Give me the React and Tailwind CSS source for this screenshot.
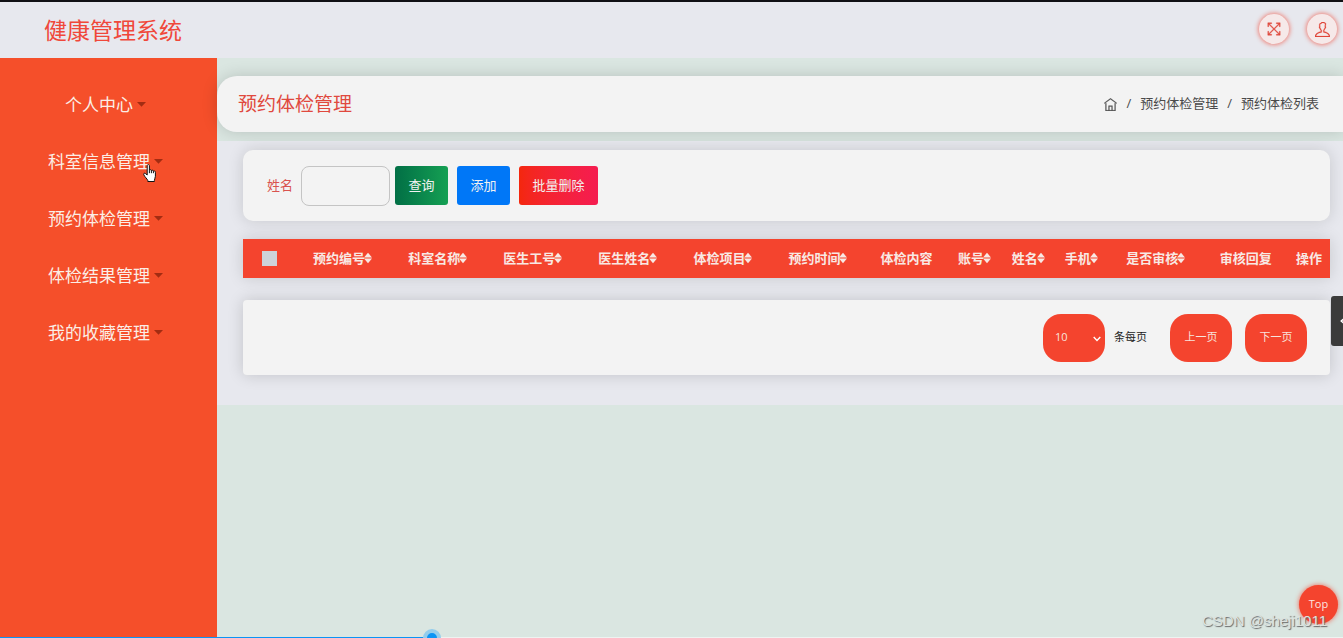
import { TfiFullscreen, TfiHome, TfiUser } from 'react-icons/tfi'

const menu = ['个人中心', '科室信息管理', '预约体检管理', '体检结果管理', '我的收藏管理']

const columns = [
  { name: '预约编号', sort: true, width: 'w-[95px]' },
  { name: '科室名称', sort: true, width: 'w-[95px]' },
  { name: '医生工号', sort: true, width: 'w-[95px]' },
  { name: '医生姓名', sort: true, width: 'w-[95px]' },
  { name: '体检项目', sort: true, width: 'w-[95px]' },
  { name: '预约时间', sort: true, width: 'w-[95px]' },
  { name: '体检内容', sort: false, width: 'w-[82px]' },
  { name: '账号', sort: true, width: 'w-[54px]' },
  { name: '姓名', sort: true, width: 'w-[53px]' },
  { name: '手机', sort: true, width: 'w-[53px]' },
  { name: '是否审核', sort: true, width: 'w-[96px]' },
  { name: '审核回复', sort: false, width: 'w-[84px]' },
  { name: '操作', sort: false, width: 'w-[42px]' },
]

const Caret = () => (
  <svg className="w-[9px] h-[5px] text-[#a32c12]" viewBox="0 0 9 5" fill="currentColor">
    <path d="M0 0h9L4.5 4.8z" />
  </svg>
)

const SortIcon = () => (
  <svg className="inline-block w-2 h-3 -ml-px align-[-1px]" viewBox="0 0 8 12" fill="currentColor">
    <path d="M0 5.4L4 0.8l4 4.6zM0 6.6h8L4 11.2z" />
  </svg>
)

const RoundButton = ({ label, children }) => (
  <button
    aria-label={label}
    className="flex items-center justify-center w-[30px] h-[30px] rounded-full bg-[#f6e9e9] text-[#e0463a] shadow-[0_0_4px_1px_rgba(244,67,46,0.6)]"
  >
    {children}
  </button>
)

const Header = () => (
  <header className="flex items-center justify-between h-[58px] border-t-2 border-[#101014] bg-[#e7e8ee] pl-11 pr-[6px]">
    <h1 className="text-[23px] leading-8 text-[#f0473a]">健康管理系统</h1>
    <div className="flex gap-[18px] pb-[2px]">
      <RoundButton label="全屏">
        <TfiFullscreen className="w-[14px] h-[14px]" strokeWidth="0.5" />
      </RoundButton>
      <RoundButton label="用户">
        <TfiUser className="w-[15px] h-[15px]" strokeWidth="0.3" />
      </RoundButton>
    </div>
  </header>
)

const Sidebar = () => (
  <nav className="w-[217px] shrink-0 bg-[#f54f2a] pt-[18px] pr-[6px]">
    {menu.map((item) => (
      <a
        key={item}
        href="#"
        className="flex items-center justify-center gap-1 h-[57px] text-[17px] text-[#fbeee6]"
      >
        {item}
        <Caret />
      </a>
    ))}
  </nav>
)

const Breadcrumb = () => (
  <div className="flex items-center justify-between h-14 rounded-l-[20px] bg-[#f3f3f3] pl-[21px] pr-6 shadow-[0_0_16px_rgba(0,0,0,0.16)]">
    <h2 className="text-[19px] text-[#e0493e]">预约体检管理</h2>
    <div className="flex items-center gap-[9px] text-[13px] text-[#4a4a4a]">
      <a href="#" aria-label="首页">
        <TfiHome className="w-[13px] h-[13px]" strokeWidth="0.4" />
      </a>
      <span>/</span>
      <a href="#">预约体检管理</a>
      <span>/</span>
      <span>预约体检列表</span>
    </div>
  </div>
)

const SearchBar = () => (
  <form className="flex items-center h-[71px] rounded-[10px] bg-[#f3f3f3] pl-6 text-[13px] shadow-[0_0_16px_rgba(0,0,0,0.14)]">
    <label htmlFor="name" className="text-[#d9534f]">
      姓名
    </label>
    <input
      id="name"
      type="text"
      className="w-[89px] h-10 ml-2 rounded-lg border border-[#c4c4c4] bg-transparent px-3"
    />
    <button type="button" className="w-[53px] h-[39px] ml-[5px] rounded-[3px] bg-linear-to-r from-[#026f45] to-[#15a053] text-[#f2f2f2]">
      查询
    </button>
    <button type="button" className="w-[53px] h-[39px] ml-[9px] rounded-[3px] bg-[#0077f7] text-[#f2f2f2]">
      添加
    </button>
    <button type="button" className="w-[79px] h-[39px] ml-[9px] rounded-[3px] bg-linear-to-r from-[#f4270c] to-[#f51c50] text-[#f2f2f2]">
      批量删除
    </button>
  </form>
)

const DataTable = () => (
  <table className="w-full mt-[18px] table-fixed bg-[#f4442e] text-[13px] text-[#f8e9e4] shadow-[0_0_16px_rgba(0,0,0,0.14)]">
    <thead>
      <tr className="h-[39px]">
        <th className="w-[52px]">
          <input
            type="checkbox"
            aria-label="全选"
            className="block w-[15px] h-[15px] mx-auto appearance-none bg-[#ced2d8]"
          />
        </th>
        {columns.map((col) => (
          <th key={col.name} className={`${col.width} p-0 font-bold whitespace-nowrap`}>
            {col.name}
            {col.sort && <SortIcon />}
          </th>
        ))}
      </tr>
    </thead>
  </table>
)

const Pagination = () => (
  <div className="flex items-center justify-end h-[75px] mt-[22px] rounded bg-[#f3f3f3] pr-[23px] text-[11px] shadow-[0_0_16px_rgba(0,0,0,0.16)]">
    <div className="relative">
      <select
        id="size"
        defaultValue="10"
        className="block w-[62px] h-12 appearance-none rounded-[18px] bg-[#f4442e] pl-3 text-[#f8e3dd]"
      >
        <option>10</option>
        <option>20</option>
        <option>50</option>
      </select>
      <svg className="absolute right-1 top-[22px] w-2 h-[6px] text-white pointer-events-none" viewBox="0 0 8 6" fill="none" stroke="currentColor" strokeWidth="1.4">
        <path d="M0.7 1L4 4.4 7.3 1" />
      </svg>
    </div>
    <label htmlFor="size" className="ml-[9px] text-[#222]">
      条每页
    </label>
    <button className="w-[62px] h-12 ml-[23px] rounded-[18px] bg-[#f4442e] text-[#f8e3dd]">上一页</button>
    <button className="w-[62px] h-12 ml-[13px] rounded-[18px] bg-[#f4442e] text-[#f8e3dd]">下一页</button>
  </div>
)

const App = () => {
  return (
    <div
      lang="zh-CN"
      className="relative flex flex-col min-h-screen overflow-hidden bg-[#dae6e1] font-['Open_Sans','Noto_Sans_CJK_SC',sans-serif]"
    >
      <Header />
      <div className="flex grow">
        <Sidebar />
        <main className="grow min-w-0 pt-[18px]">
          <Breadcrumb />
          <section className="mt-[9px] bg-[#e7e8ee] pt-[9px] pb-[30px] pl-[26px] pr-[13px]">
            <SearchBar />
            <DataTable />
            <Pagination />
          </section>
        </main>
      </div>

      {/* drawer handle */}
      <button
        aria-label="展开"
        className="absolute right-0 top-[296px] flex items-center w-3 h-[50px] overflow-hidden rounded-l-[3px] bg-[#3b3b3b] pl-[9px] text-white"
      >
        <svg className="w-[6px] h-2 shrink-0" viewBox="0 0 6 8" fill="none" stroke="currentColor" strokeWidth="1.4">
          <path d="M5 0.8L1.2 4 5 7.2" />
        </svg>
      </button>

      <a
        href="#"
        className="absolute right-[5px] bottom-[14px] flex items-center justify-center w-[39px] h-[39px] rounded-full bg-[#f4442e] text-[11px] text-[#fbe6e0] shadow-[0_0_5px_rgba(244,68,46,0.8)]"
      >
        Top
      </a>
      <span className="absolute right-4 bottom-[7px] font-['Liberation_Sans',sans-serif] text-[15px] leading-5 text-[#dde3e0] [text-shadow:1px_1px_1px_#666]">
        CSDN @sheji1011
      </span>

      {/* playback progress */}
      <div className="absolute inset-x-0 bottom-0 h-px bg-[#eef3f1]">
        <div className="relative w-[432px] h-px bg-[#0a94f5]">
          <span className="absolute -right-[9px] -top-[8px] w-[18px] h-[18px] rounded-full border-4 border-[#93cdec] bg-[#0a94f5]" />
        </div>
      </div>

      {/* pointer */}
      <svg className="absolute left-[143px] top-[164px] w-[13px] h-[18px]" viewBox="0 0 13 18" fill="#fff" stroke="#111" strokeWidth="1" strokeLinejoin="round">
        <path d="M4.2 11V2c0-2 2.2-2 2.2 0v4.2c.6-.8 1.8-.6 2 .3.7-.6 1.8-.3 2 .6.9-.5 2 0 2 1.2v4c0 1.6-1 2.4-1 4.2v1H4.8v-1C4.2 14.8 1.8 13 .8 10.800c-.6-1.3.8-2.2 1.7-1.2z" />
        <path d="M6.400 6.200v3M8.400 6.500v2.700M10.400 7.100v2.100" fill="none" />
      </svg>
    </div>
  )
}

export default App
